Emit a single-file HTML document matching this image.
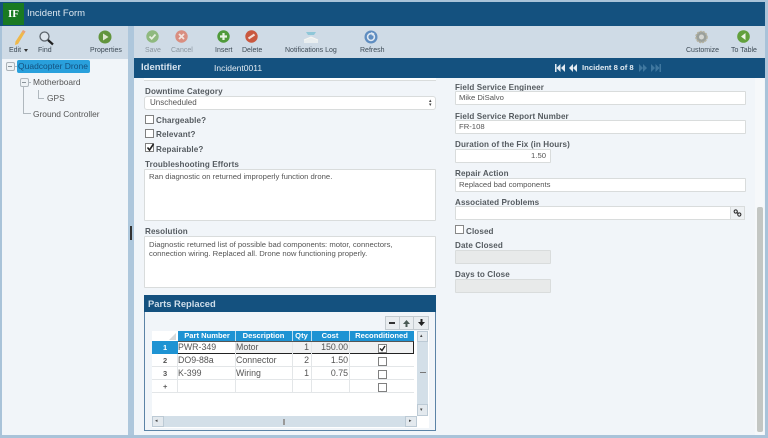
<!DOCTYPE html>
<html><head><meta charset="utf-8"><style>
html,body{margin:0;padding:0;background:#a9c3d9}
#p{position:relative;width:768px;height:438px;overflow:hidden;background:#a9c3d9;font-family:"Liberation Sans",sans-serif;color:#444;filter:blur(.3px)}
#p div,#p span.a,#p svg.a{position:absolute}
.t{white-space:nowrap;line-height:1}
.tb{font-size:7px;color:#3d4a55;text-align:center;white-space:nowrap;line-height:1;top:47px}
.dim{color:#8b969f}
.lb{font-size:8.1px;font-weight:bold;color:#555b60;white-space:nowrap;line-height:1;letter-spacing:.1px;margin-top:1px}
.in{background:#fff;border:1px solid #d9dcdc;box-sizing:border-box;font-size:7.7px;color:#555;line-height:1;padding:2px 0 0 3px;border-radius:1px;white-space:nowrap}
.cb{background:#fff;border:1px solid #808080;box-sizing:border-box;width:9px;height:9px}
.cell{font-size:8.8px;color:#555;white-space:nowrap;line-height:1}
.r{text-align:right}
.h{font-size:7.6px;font-weight:bold;color:#fff;text-align:center;line-height:1;white-space:nowrap}
.ln{background:#e3e6e8}
.sb{background:#e3e9ee;border:1px solid #bccad5;box-sizing:border-box}
</style></head><body><div id="p">
<div style="left:0;top:2px;width:765px;height:24px;background:#14517f"></div>
<div style="left:3px;top:3px;width:21px;height:22px;background:#1a7a22"></div>
<div class="t" style="left:8px;top:8px;font:bold 11px 'Liberation Serif',serif;color:#fff">IF</div>
<div class="t" style="left:27px;top:9px;font-size:9.5px;color:#dfe9f1">Incident Form</div>

<div style="left:2px;top:26px;width:126px;height:33px;background:#cfdbe6"></div>
<div style="left:2px;top:59px;width:126px;height:376px;background:#f1f5f9"></div>
<div style="left:128px;top:26px;width:6px;height:409px;background:#aec7dc"></div>
<div style="left:130px;top:226px;width:2px;height:14px;background:#333"></div>
<div style="left:134px;top:26px;width:631px;height:33px;background:#cfdbe6"></div>
<div style="left:134px;top:58px;width:631px;height:20px;background:#14517f"></div>
<div style="left:134px;top:78px;width:631px;height:357px;background:#f1f5f9"></div>
<div style="left:755px;top:78px;width:9px;height:357px;background:#f6f8fa"></div>
<div style="left:757px;top:207px;width:6px;height:225px;background:#c3c6c3;border-radius:2px"></div>

<!-- left toolbar -->
<svg class="a" style="left:12px;top:29px" width="16" height="17" viewBox="0 0 16 17"><path d="M11 1L13.5 2.5 6 15 3 16 3.5 12.5Z" fill="#efb84a"/><path d="M11 1L13.5 2.5 12.3 4.5 9.8 3Z" fill="#e9a07d"/></svg>
<svg class="a" style="left:38px;top:30px" width="16" height="16" viewBox="0 0 16 16"><circle cx="6.5" cy="6.5" r="4.5" fill="#dde6ee" stroke="#59626a" stroke-width="1.3"/><path d="M10 10L15 14.5" stroke="#222" stroke-width="2.2"/></svg>
<svg class="a" style="left:98px;top:30px" width="14" height="14" viewBox="0 0 14 14"><circle cx="7" cy="7" r="6.5" fill="#62953d"/><path d="M5 3.5L10.5 7 5 10.5Z" fill="#dfe7d0"/></svg>
<div class="tb" style="left:9px">Edit</div>
<div class="a" style="left:24px;top:49px;width:0;height:0;border:2.5px solid transparent;border-top:3px solid #333;border-bottom:0"></div>
<div class="tb" style="left:38px">Find</div>
<div class="tb" style="left:90px">Properties</div>

<!-- tree -->
<div style="left:17px;top:60px;width:73px;height:13px;background:#29a0dc;border-radius:2px"></div>
<div class="t" style="left:18px;top:62px;font-size:8.5px;color:#14517f">Quadcopter Drone</div>
<div style="left:6px;top:62px;width:7px;height:7px;border:1px solid #aab2b8;border-radius:2px;background:#eef2f5"></div>
<div style="left:8px;top:66px;width:4px;height:1px;background:#8a939a"></div>
<div style="left:15px;top:66px;width:2px;height:1px;background:#b0b8be"></div>
<div style="left:23px;top:86px;width:1px;height:28px;background:#b0b8be"></div>
<div style="left:24px;top:113px;width:7px;height:1px;background:#b0b8be"></div>
<div style="left:20px;top:78px;width:7px;height:7px;border:1px solid #b0b8be;border-radius:2px;background:#eef2f5"></div>
<div style="left:22px;top:82px;width:4px;height:1px;background:#8a939a"></div>
<div style="left:29px;top:82px;width:2px;height:1px;background:#b0b8be"></div>
<div style="left:38px;top:90px;width:1px;height:8px;background:#b0b8be"></div>
<div style="left:38px;top:98px;width:6px;height:1px;background:#b0b8be"></div>
<div class="t" style="left:33px;top:78px;font-size:8.4px;color:#555">Motherboard</div>
<div class="t" style="left:47px;top:94px;font-size:8.4px;color:#555">GPS</div>
<div class="t" style="left:33px;top:110px;font-size:8.4px;color:#555">Ground Controller</div>

<!-- main toolbar -->
<svg class="a" style="left:146px;top:30px" width="13" height="13" viewBox="0 0 13 13"><circle cx="6.5" cy="6.5" r="6.2" fill="#8fb97f"/><path d="M3.5 6.5L5.7 8.7 9.5 4.5" fill="none" stroke="#e8f0e2" stroke-width="1.8"/></svg>
<svg class="a" style="left:175px;top:30px" width="13" height="13" viewBox="0 0 13 13"><circle cx="6.5" cy="6.5" r="6.2" fill="#d98e80"/><path d="M4 4L9 9M9 4L4 9" stroke="#f2e3de" stroke-width="1.8"/></svg>
<svg class="a" style="left:217px;top:30px" width="13" height="13" viewBox="0 0 13 13"><circle cx="6.5" cy="6.5" r="6.2" fill="#4f9a3a"/><path d="M6.5 3V10M3 6.5H10" stroke="#e9f3e3" stroke-width="2.2"/></svg>
<svg class="a" style="left:245px;top:30px" width="13" height="13" viewBox="0 0 13 13"><circle cx="6.5" cy="6.5" r="6.2" fill="#c9583f"/><path d="M3.5 8.5L9.5 4.5" stroke="#f3dfd8" stroke-width="2.2"/></svg>
<svg class="a" style="left:303px;top:31px" width="16" height="13" viewBox="0 0 16 13"><path d="M1 9L8 6 15 9 15 12 1 12Z" fill="#e9eef0"/><path d="M1 9L8 6 15 9" fill="none" stroke="#f7f7f2" stroke-width="1"/><path d="M3 1H13L11 4H5Z" fill="#8fc7d8"/></svg>
<svg class="a" style="left:364px;top:30px" width="14" height="14" viewBox="0 0 14 14"><circle cx="7" cy="7" r="6.5" fill="#5f8dc0"/><circle cx="7" cy="7" r="3.4" fill="none" stroke="#dfe8f2" stroke-width="1.6"/><path d="M7 2L10.5 3.5 8 6Z" fill="#dfe8f2"/></svg>
<svg class="a" style="left:695px;top:30px" width="13" height="14" viewBox="0 0 13 14"><circle cx="6.5" cy="7" r="5.5" fill="#9aa09c" stroke="#b5b2a0" stroke-width="1.6" stroke-dasharray="2 1"/><circle cx="6.5" cy="7" r="2.5" fill="#d4d6d2"/></svg>
<svg class="a" style="left:737px;top:30px" width="13" height="13" viewBox="0 0 13 13"><circle cx="6.5" cy="6.5" r="6.3" fill="#62a03c"/><path d="M8.5 3L4 6.5 8.5 10Z" fill="#eef4e6"/></svg>
<div class="tb dim" style="left:145px">Save</div>
<div class="tb dim" style="left:171px">Cancel</div>
<div class="tb" style="left:215px">Insert</div>
<div class="tb" style="left:242px">Delete</div>
<div class="tb" style="left:285px">Notifications Log</div>
<div class="tb" style="left:360px">Refresh</div>
<div class="tb" style="left:686px">Customize</div>
<div class="tb" style="left:731px">To Table</div>

<!-- identifier bar -->
<div class="t" style="left:141px;top:63px;font-size:9.5px;font-weight:bold;color:#d6e3ee">Identifier</div>
<div class="t" style="left:214px;top:64px;font-size:8.5px;color:#e3ebf2">Incident0011</div>
<svg class="a" style="left:555px;top:64px" width="10" height="8" viewBox="0 0 10 8"><path d="M0 0H1.5V8H0ZM5.5 0V8L1.5 4ZM10 0V8L6 4Z" fill="#e3ebf2"/></svg>
<svg class="a" style="left:569px;top:64px" width="8" height="8" viewBox="0 0 8 8"><path d="M4 0V8L0 4ZM8 0V8L4 4Z" fill="#e3ebf2"/></svg>
<div class="t" style="left:582px;top:64px;font-size:7.7px;font-weight:bold;color:#e3ebf2">Incident 8 of 8</div>
<svg class="a" style="left:639px;top:64px" width="8" height="8" viewBox="0 0 8 8"><path d="M0 0V8L4 4ZM4 0V8L8 4Z" fill="#3f779f"/></svg>
<svg class="a" style="left:651px;top:64px" width="10" height="8" viewBox="0 0 10 8"><path d="M0 0V8L4 4ZM4.5 0V8L8.5 4ZM8.5 0H10V8H8.5Z" fill="#3f779f"/></svg>

<!-- left column form -->
<div style="left:144px;top:78px;width:292px;height:2px;background:#fff;border-bottom:1px solid #d9dcdc"></div>
<div class="lb" style="left:145px;top:87px">Downtime Category</div>
<div class="in" style="left:144px;top:96px;width:292px;height:14px;border-radius:3px;padding:2px 0 0 5px;font-size:8px">Unscheduled</div>
<div class="t" style="left:429px;top:99px;font-size:5px;color:#444;line-height:4px">▴<br>▾</div>
<div class="cb" style="left:145px;top:115px"></div>
<div class="lb" style="left:156px;top:116px">Chargeable?</div>
<div class="cb" style="left:145px;top:129px"></div>
<div class="lb" style="left:156px;top:130px">Relevant?</div>
<div class="cb" style="left:145px;top:143px"></div>
<svg class="a" style="left:145px;top:142px" width="11" height="10" viewBox="0 0 11 10"><path d="M2.5 5.5L4.5 8 8.5 2" fill="none" stroke="#222" stroke-width="1.6"/></svg>
<div class="lb" style="left:156px;top:145px">Repairable?</div>
<div class="lb" style="left:145px;top:160px">Troubleshooting Efforts</div>
<div class="in" style="left:144px;top:169px;width:292px;height:52px;padding:3px 0 0 4px">Ran diagnostic on returned improperly function drone.</div>
<div class="lb" style="left:145px;top:227px">Resolution</div>
<div class="in" style="left:144px;top:236px;width:292px;height:52px;padding:3px 0 0 4px;line-height:9px">Diagnostic returned list of possible bad components: motor, connectors,<br>connection wiring. Replaced all. Drone now functioning properly.</div>

<!-- parts replaced -->
<div style="left:144px;top:295px;width:292px;height:136px;border:1px solid #5b83a6;box-sizing:border-box;background:#f1f5f9"></div>
<div style="left:144px;top:295px;width:292px;height:17px;background:#14517f"></div>
<div class="t" style="left:148px;top:299px;font-size:9.4px;font-weight:bold;color:#cfdeea">Parts Replaced</div>
<div style="left:385px;top:316px;width:44px;height:14px;background:#e9edf0;border:1px solid #c4cbd0;box-sizing:border-box"></div>
<div style="left:399px;top:316px;width:1px;height:14px;background:#c4cbd0"></div>
<div style="left:413px;top:316px;width:1px;height:14px;background:#c4cbd0"></div>
<div style="left:389px;top:322px;width:6px;height:2px;background:#333"></div>
<svg class="a" style="left:402px;top:319px" width="9" height="9" viewBox="0 0 9 9"><path d="M4.5 1L8 5H5.5V8H3.5V5H1Z" fill="#4a5a55"/></svg>
<svg class="a" style="left:417px;top:318px" width="9" height="9" viewBox="0 0 9 9"><path d="M4.5 8L8 4H5.5V1H3.5V4H1Z" fill="#222"/></svg>

<div style="left:152px;top:331px;width:277px;height:97px;background:#fff"></div>
<div style="left:178px;top:331px;width:236px;height:10px;background:#1e93d3"></div>
<svg class="a" style="left:168px;top:332px" width="9" height="9" viewBox="0 0 9 9"><path d="M8 1V8H1Z" fill="#d6d9db"/></svg>
<div class="h" style="left:178px;top:332px;width:58px">Part Number</div>
<div class="h" style="left:235px;top:332px;width:57px">Description</div>
<div class="h" style="left:292px;top:332px;width:19px">Qty</div>
<div class="h" style="left:311px;top:332px;width:38px">Cost</div>
<div class="h" style="left:349px;top:332px;width:65px">Reconditioned</div>
<div style="left:235px;top:331px;width:1px;height:10px;background:#bfe0f2"></div>
<div style="left:292px;top:331px;width:1px;height:10px;background:#bfe0f2"></div>
<div style="left:311px;top:331px;width:1px;height:10px;background:#bfe0f2"></div>
<div style="left:349px;top:331px;width:1px;height:10px;background:#bfe0f2"></div>

<div style="left:152px;top:341px;width:26px;height:13px;background:#1e93d3"></div>
<div style="left:178px;top:341px;width:236px;height:13px;background:#f0f1f2;border-top:1px solid #555;border-bottom:1px solid #222;border-right:1px solid #222;box-sizing:border-box"></div>
<div style="left:178px;top:342px;width:57px;height:11px;background:#fff"></div>
<div class="ln" style="left:152px;top:366px;width:262px;height:1px"></div>
<div class="ln" style="left:152px;top:379px;width:262px;height:1px"></div>
<div class="ln" style="left:152px;top:392px;width:262px;height:1px"></div>
<div class="ln" style="left:177px;top:354px;width:1px;height:39px"></div>
<div class="ln" style="left:235px;top:342px;width:1px;height:51px"></div>
<div class="ln" style="left:292px;top:342px;width:1px;height:51px"></div>
<div class="ln" style="left:311px;top:342px;width:1px;height:51px"></div>
<div class="ln" style="left:349px;top:342px;width:1px;height:51px"></div>
<div class="cell" style="left:163px;top:344px;font-size:7.5px;font-weight:bold;color:#fff">1</div>
<div class="cell" style="left:163px;top:357px;font-size:7.5px;font-weight:bold">2</div>
<div class="cell" style="left:163px;top:370px;font-size:7.5px;font-weight:bold">3</div>
<div class="cell" style="left:163px;top:383px;font-size:7.5px;font-weight:bold">+</div>
<div class="cell" style="left:178px;top:343px">PWR-349</div>
<div class="cell" style="left:236px;top:343px">Motor</div>
<div class="cell r" style="left:293px;width:16px;top:343px">1</div>
<div class="cell r" style="left:312px;width:36px;top:343px">150.00</div>
<div class="cb" style="left:378px;top:344px"></div>
<svg class="a" style="left:378px;top:344px" width="9" height="9" viewBox="0 0 9 9"><path d="M2 4.5L4 6.5 7 2" fill="none" stroke="#222" stroke-width="1.4"/></svg>
<div class="cell" style="left:178px;top:356px">DO9-88a</div>
<div class="cell" style="left:236px;top:356px">Connector</div>
<div class="cell r" style="left:293px;width:16px;top:356px">2</div>
<div class="cell r" style="left:312px;width:36px;top:356px">1.50</div>
<div class="cb" style="left:378px;top:357px"></div>
<div class="cell" style="left:178px;top:369px">K-399</div>
<div class="cell" style="left:236px;top:369px">Wiring</div>
<div class="cell r" style="left:293px;width:16px;top:369px">1</div>
<div class="cell r" style="left:312px;width:36px;top:369px">0.75</div>
<div class="cb" style="left:378px;top:370px"></div>
<div class="cb" style="left:378px;top:383px"></div>

<!-- v scroll -->
<div style="left:417px;top:331px;width:11px;height:85px;background:#d3dfe8"></div>
<div class="sb" style="left:417px;top:331px;width:11px;height:11px"></div>
<div class="sb" style="left:417px;top:404px;width:11px;height:12px"></div>
<div style="left:420px;top:372px;width:6px;height:1px;background:#777"></div>
<div class="t" style="left:420px;top:334px;font-size:5px;color:#444">▴</div>
<div class="t" style="left:420px;top:408px;font-size:5px;color:#444">▾</div>
<!-- h scroll -->
<div style="left:152px;top:416px;width:265px;height:11px;background:#d3dfe8"></div>
<div class="sb" style="left:152px;top:416px;width:12px;height:11px"></div>
<div class="sb" style="left:405px;top:416px;width:12px;height:11px"></div>
<div style="left:283px;top:419px;width:2px;height:6px;background:#999"></div>
<div class="t" style="left:155px;top:419px;font-size:5px;color:#444">◂</div>
<div class="t" style="left:409px;top:419px;font-size:5px;color:#444">▸</div>

<!-- right column -->
<div class="lb" style="left:455px;top:83px">Field Service Engineer</div>
<div class="in" style="left:455px;top:91px;width:291px;height:14px">Mike DiSalvo</div>
<div class="lb" style="left:455px;top:112px">Field Service Report Number</div>
<div class="in" style="left:455px;top:120px;width:291px;height:14px">FR-108</div>
<div class="lb" style="left:455px;top:140px">Duration of the Fix (in Hours)</div>
<div class="in" style="left:455px;top:149px;width:96px;height:14px;text-align:right;padding:2px 4px 0 0">1.50</div>
<div class="lb" style="left:455px;top:169px">Repair Action</div>
<div class="in" style="left:455px;top:178px;width:291px;height:14px">Replaced bad components</div>
<div class="lb" style="left:455px;top:198px">Associated Problems</div>
<div class="in" style="left:455px;top:206px;width:276px;height:14px"></div>
<div style="left:730px;top:206px;width:15px;height:14px;background:#eef1f3;border:1px solid #d9dcdc;box-sizing:border-box"></div>
<svg class="a" style="left:733px;top:209px" width="9" height="8" viewBox="0 0 9 8"><circle cx="2.7" cy="2.5" r="1.6" fill="none" stroke="#222" stroke-width="1"/><circle cx="6.3" cy="5.5" r="1.6" fill="none" stroke="#222" stroke-width="1"/><path d="M3.5 3.2L5.5 4.8" stroke="#222"/></svg>
<div class="cb" style="left:455px;top:225px;border-color:#888"></div>
<div class="lb" style="left:466px;top:227px">Closed</div>
<div class="lb" style="left:455px;top:241px">Date Closed</div>
<div class="in" style="left:455px;top:250px;width:96px;height:14px;background:#e8eaea"></div>
<div class="lb" style="left:455px;top:270px">Days to Close</div>
<div class="in" style="left:455px;top:279px;width:96px;height:14px;background:#e8eaea"></div>
</div></body></html>
